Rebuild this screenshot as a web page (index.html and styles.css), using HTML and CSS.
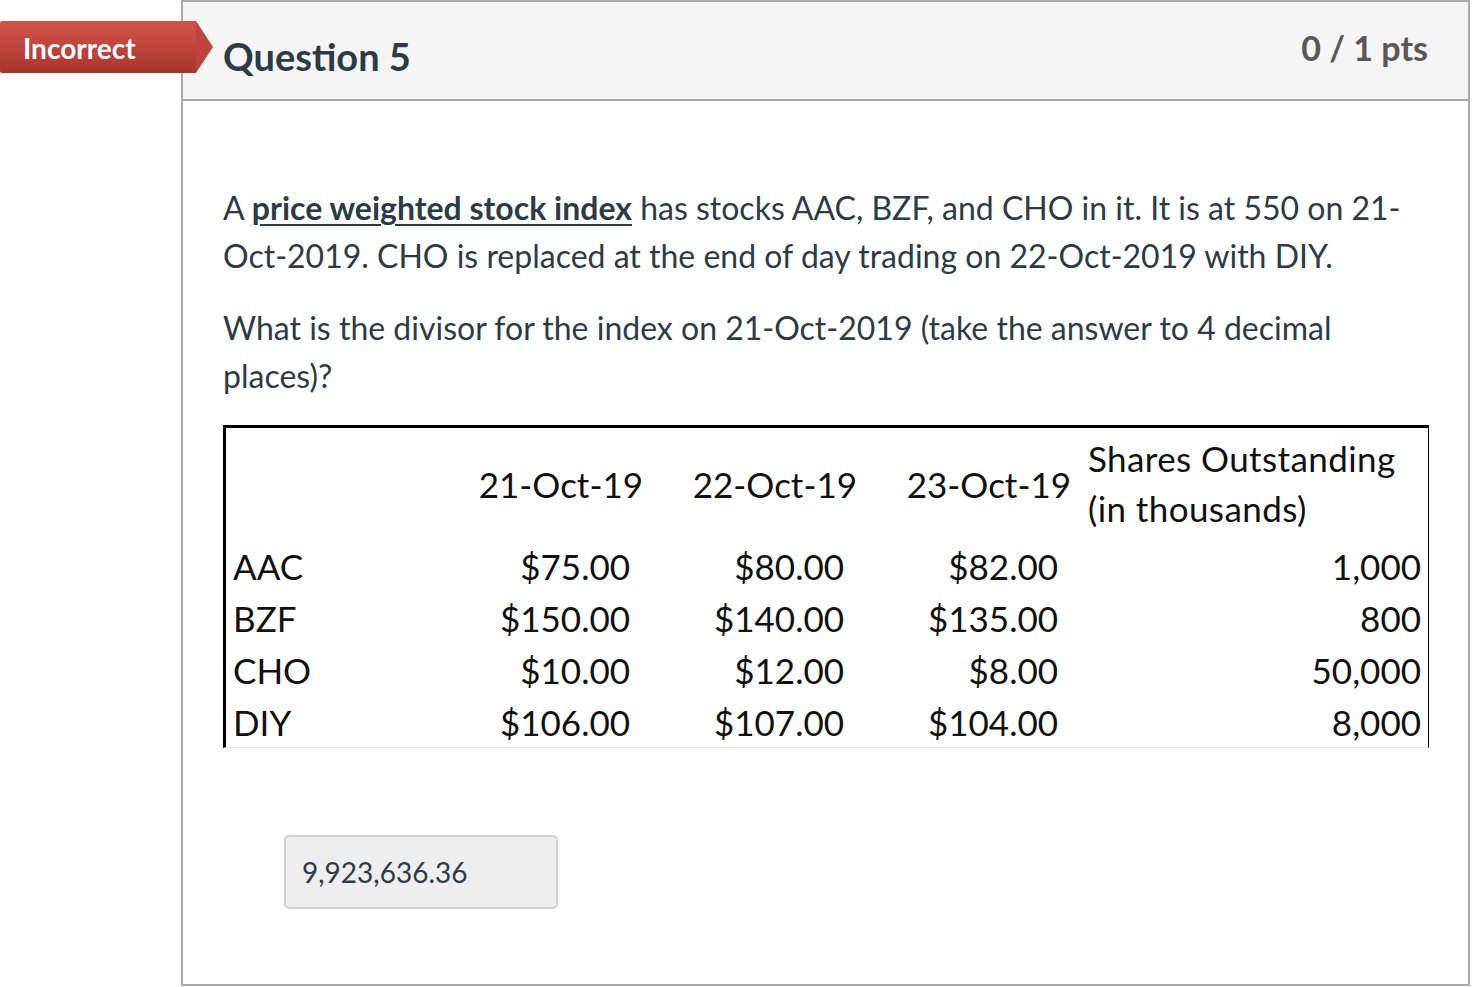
FILE: index.html
```html
<!DOCTYPE html>
<html>
<head>
<meta charset="utf-8">
<link rel="stylesheet" href="styles.css">
</head>
<body>
<div class="page">
  <div class="badge">Incorrect</div>
  <div class="question">
    <div class="q-header">
      <h2 class="q-title">Question 5</h2>
      <div class="q-pts">0 / 1 pts</div>
    </div>
    <div class="q-body">
      <p class="q-text">A <a class="term" href="#">price weighted stock index</a> has stocks AAC, BZF, and CHO in it. It is at 550 on 21-Oct-2019. CHO is replaced at the end of day trading on 22-Oct-2019 with DIY.</p>
      <p class="q-text">What is the divisor for the index on 21-Oct-2019 (take the answer to 4 decimal places)?</p>
      <div class="tbl">
        <div class="th"></div>
        <div class="th date">21-Oct-19</div>
        <div class="th date">22-Oct-19</div>
        <div class="th date">23-Oct-19</div>
        <div class="th shares">Shares Outstanding<br>(in thousands)</div>

        <div class="td lbl">AAC</div>
        <div class="td num">$75.00</div>
        <div class="td num">$80.00</div>
        <div class="td num">$82.00</div>
        <div class="td sh">1,000</div>

        <div class="td lbl">BZF</div>
        <div class="td num">$150.00</div>
        <div class="td num">$140.00</div>
        <div class="td num">$135.00</div>
        <div class="td sh">800</div>

        <div class="td lbl">CHO</div>
        <div class="td num">$10.00</div>
        <div class="td num">$12.00</div>
        <div class="td num">$8.00</div>
        <div class="td sh">50,000</div>

        <div class="td lbl last">DIY</div>
        <div class="td num last">$106.00</div>
        <div class="td num last">$107.00</div>
        <div class="td num last">$104.00</div>
        <div class="td sh last">8,000</div>
      </div>
      <div class="answer">9,923,636.36</div>
    </div>
  </div>
</div>
</body>
</html>
```

FILE: styles.css
```css
html, body {
  margin: 0;
  padding: 0;
  background: #ffffff;
}
body {
  font-family: Lato, "Open Sans", sans-serif;
  color: #2d3b45;
}
.page {
  position: relative;
  width: 1475px;
  height: 987px;
  overflow: hidden;
}
.badge {
  position: absolute;
  left: 0;
  top: 21px;
  width: 196px;
  height: 52px;
  padding-left: 23px;
  box-sizing: border-box;
  background: linear-gradient(#d4544b, #a9352c);
  color: #ffffff;
  font-weight: 700;
  font-size: 28px;
  line-height: 54px;
  border-radius: 2px 0 0 2px;
  z-index: 2;
}
.badge::after {
  content: "";
  position: absolute;
  right: -17px;
  top: 0;
  width: 0;
  height: 0;
  border-top: 26px solid transparent;
  border-bottom: 26px solid transparent;
  border-left: 17px solid #bd443b;
}
.question {
  margin-left: 181px;
  width: 1289px;
  height: 986px;
  box-sizing: border-box;
  border: 2px solid #aaaaaa;
}
.q-header {
  height: 99px;
  box-sizing: border-box;
  background: #f5f5f5;
  border-bottom: 2px solid #aaaaaa;
  display: flex;
  justify-content: space-between;
  align-items: flex-start;
  padding: 0 40px 0 40px;
}
.q-title {
  margin: 0;
  padding-top: 27px;
  font-size: 38px;
  font-weight: 700;
  line-height: 54px;
  color: #2d3b45;
}
.q-pts {
  padding-top: 22px;
  font-size: 34px;
  font-weight: 700;
  line-height: 48px;
  color: #585858;
}
.q-body {
  padding: 83px 40px 0 40px;
}
.q-text {
  margin: 0 0 24px 0;
  font-size: 32px;
  line-height: 48px;
}
.term {
  color: #2d3b45;
  font-weight: 700;
  text-decoration: underline;
  text-underline-offset: 4px;
  text-decoration-thickness: 2px;
}
.tbl {
  margin-top: 25px;
  width: 1206px;
  box-sizing: border-box;
  display: grid;
  grid-template-columns: 204px 214px 214px 214px 1fr;
  border-top: 3px solid #000000;
  border-left: 3px solid #000000;
  border-right: 1px solid #000000;
  border-bottom: 1px solid #e4e4e4;
  color: #111111;
  font-size: 35px;
}
.th {
  height: 112px;
  box-sizing: border-box;
}
.th.date {
  display: flex;
  align-items: center;
  justify-content: flex-end;
  padding-right: 1px;
  line-height: 50px;
}
.th.shares {
  padding: 5px 0 0 16px;
  line-height: 50px;
  letter-spacing: 0.4px;
}
.td {
  height: 52px;
  line-height: 52px;
  white-space: nowrap;
}
.td.last {
  height: 51px;
}
.td.lbl {
  padding-left: 7px;
}
.td.num {
  text-align: right;
  padding-right: 14px;
}
.td.sh {
  text-align: right;
  padding-right: 7px;
}
.answer {
  margin: 87px 0 0 61px;
  width: 274px;
  height: 74px;
  box-sizing: border-box;
  background: #eeeeee;
  border: 2px solid #d2d2d2;
  border-radius: 5px;
  padding-left: 16px;
  font-size: 28px;
  line-height: 70px;
  color: #2d3b45;
}
```
